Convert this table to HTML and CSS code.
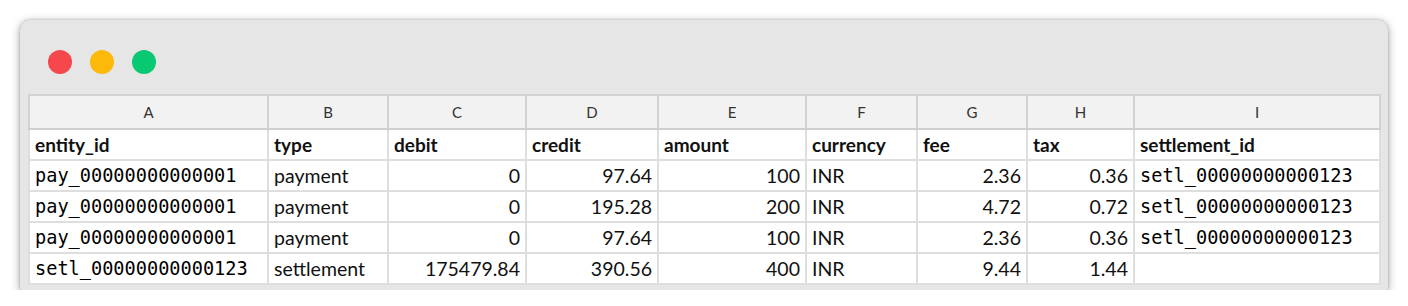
FILE: index.html
```html
<!DOCTYPE html>
<html>
<head>
<meta charset="utf-8">
<link rel="stylesheet" href="styles.css">
</head>
<body>
<div class="window">
  <div class="titlebar">
    <span class="dot red"></span>
    <span class="dot yellow"></span>
    <span class="dot green"></span>
  </div>
  <table class="sheet">
    <colgroup>
      <col class="c-a"><col class="c-b"><col class="c-c"><col class="c-d"><col class="c-e"><col class="c-f"><col class="c-g"><col class="c-h"><col class="c-i">
    </colgroup>
    <thead>
      <tr class="letters">
        <th>A</th><th>B</th><th>C</th><th>D</th><th>E</th><th>F</th><th>G</th><th>H</th><th>I</th>
      </tr>
    </thead>
    <tbody>
      <tr class="names">
        <td>entity_id</td><td>type</td><td>debit</td><td>credit</td><td>amount</td><td>currency</td><td>fee</td><td>tax</td><td>settlement_id</td>
      </tr>
      <tr>
        <td class="mono">pay_00000000000001</td><td>payment</td><td class="num">0</td><td class="num">97.64</td><td class="num">100</td><td>INR</td><td class="num">2.36</td><td class="num">0.36</td><td class="mono">setl_00000000000123</td>
      </tr>
      <tr>
        <td class="mono">pay_00000000000001</td><td>payment</td><td class="num">0</td><td class="num">195.28</td><td class="num">200</td><td>INR</td><td class="num">4.72</td><td class="num">0.72</td><td class="mono">setl_00000000000123</td>
      </tr>
      <tr>
        <td class="mono">pay_00000000000001</td><td>payment</td><td class="num">0</td><td class="num">97.64</td><td class="num">100</td><td>INR</td><td class="num">2.36</td><td class="num">0.36</td><td class="mono">setl_00000000000123</td>
      </tr>
      <tr>
        <td class="mono">setl_00000000000123</td><td>settlement</td><td class="num">175479.84</td><td class="num">390.56</td><td class="num">400</td><td>INR</td><td class="num">9.44</td><td class="num">1.44</td><td></td>
      </tr>
    </tbody>
  </table>
</div>
</body>
</html>
```

FILE: styles.css
```css
html, body {
  margin: 0;
  padding: 0;
  background: #ffffff;
}

body {
  padding: 20px 20px 0 20px;
  font-family: Lato, "Open Sans", sans-serif;
}

.window {
  width: 1368px;
  height: 270px;
  box-sizing: border-box;
  background: #e6e6e6;
  border-radius: 10px 10px 2px 2px;
  box-shadow: 0 2px 10px rgba(0, 0, 0, 0.35), 0 0 3px rgba(0, 0, 0, 0.2);
  padding: 0 9px 0 8px;
  overflow: hidden;
}

.titlebar {
  display: flex;
  gap: 18px;
  padding: 30px 0 20px 20px;
}

.dot {
  width: 24px;
  height: 24px;
  border-radius: 50%;
  display: block;
}

.red { background: #f5474c; }
.yellow { background: #fdb90a; }
.green { background: #09c872; }

.sheet {
  width: 1351px;
  table-layout: fixed;
  border-collapse: collapse;
  background: #ffffff;
  border: 2px solid #c9c9c9;
  color: #111111;
}

.c-a { width: 239px; }
.c-b { width: 120px; }
.c-c { width: 138px; }
.c-d { width: 132px; }
.c-e { width: 148px; }
.c-f { width: 111px; }
.c-g { width: 110px; }
.c-h { width: 107px; }
.c-i { width: 246px; }

.sheet th,
.sheet td {
  border: 2px solid #dedede;
  padding: 0 5px;
  white-space: nowrap;
  overflow: hidden;
}

.letters th {
  height: 32px;
  background: #f2f2f2;
  border-color: #d2d2d2;
  border-bottom: 2px solid #cfcfcf;
  font-family: Lato, sans-serif;
  font-weight: 400;
  font-size: 15px;
  color: #333333;
  text-align: center;
}

.sheet td {
  height: 29px;
  font-size: 19.5px;
  text-align: left;
}

.names td {
  font-weight: 700;
  font-size: 19px;
}

.sheet td.num {
  text-align: right;
}

.sheet td.mono {
  font-family: "DejaVu Sans Mono", monospace;
  font-size: 18.6px;
  color: #000000;
}
```
